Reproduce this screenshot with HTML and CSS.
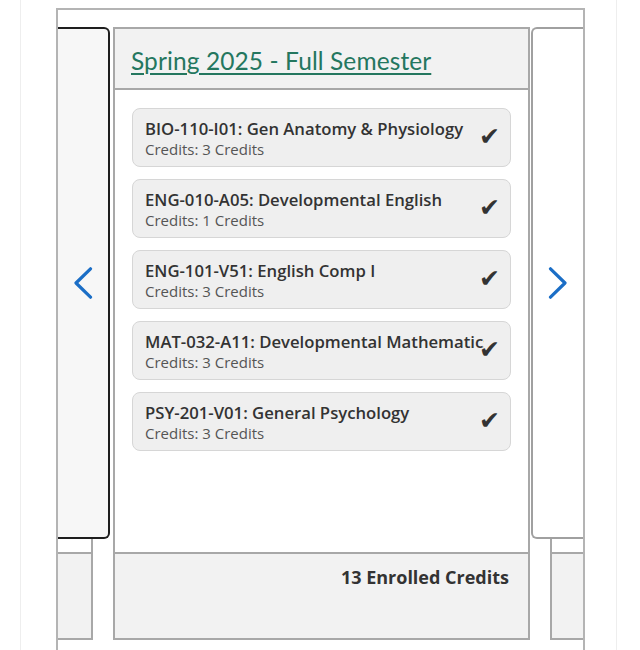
FILE: index.html
```html
<!DOCTYPE html>
<html lang="en">
<head>
<meta charset="utf-8">
<title>Schedule</title>
<link rel="stylesheet" href="styles.css">
</head>
<body>
<div class="page">
  <div class="frame">
    <div class="track">
      <section class="card card-side" aria-hidden="true">
        <header class="card-head"></header>
        <div class="card-body"></div>
        <footer class="card-foot"></footer>
      </section>
      <section class="card">
        <header class="card-head"><a class="term" href="#">Spring 2025 - Full Semester</a></header>
        <div class="card-body">
          <div class="course">
            <div class="course-title">BIO-110-I01: Gen Anatomy &amp; Physiology</div>
            <div class="course-credits">Credits: 3 Credits</div>
            <span class="check">✔</span>
          </div>
          <div class="course">
            <div class="course-title">ENG-010-A05: Developmental English</div>
            <div class="course-credits">Credits: 1 Credits</div>
            <span class="check">✔</span>
          </div>
          <div class="course">
            <div class="course-title">ENG-101-V51: English Comp I</div>
            <div class="course-credits">Credits: 3 Credits</div>
            <span class="check">✔</span>
          </div>
          <div class="course">
            <div class="course-title">MAT-032-A11: Developmental Mathematics</div>
            <div class="course-credits">Credits: 3 Credits</div>
            <span class="check">✔</span>
          </div>
          <div class="course">
            <div class="course-title">PSY-201-V01: General Psychology</div>
            <div class="course-credits">Credits: 3 Credits</div>
            <span class="check">✔</span>
          </div>
        </div>
        <footer class="card-foot">13 Enrolled Credits</footer>
      </section>
      <section class="card card-side" aria-hidden="true">
        <header class="card-head"></header>
        <div class="card-body"></div>
        <footer class="card-foot"></footer>
      </section>
    </div>
    <button class="nav nav-prev" aria-label="Previous term">
      <svg width="20" height="32" viewBox="0 0 20 32"><path d="M17.5 1.8 L3 16 L17.5 30.2" fill="none" stroke="#1b6ec6" stroke-width="3.2" stroke-linecap="round" stroke-linejoin="round"/></svg>
    </button>
    <button class="nav nav-next" aria-label="Next term">
      <svg width="20" height="32" viewBox="0 0 20 32"><path d="M2.5 1.8 L17 16 L2.5 30.2" fill="none" stroke="#1b6ec6" stroke-width="3.2" stroke-linecap="round" stroke-linejoin="round"/></svg>
    </button>
  </div>
</div>
</body>
</html>
```

FILE: styles.css
```css
html, body {
  margin: 0;
  padding: 0;
  background: #ffffff;
  font-family: "Open Sans", "Liberation Sans", sans-serif;
  color: #333333;
}

.page {
  margin: 0 23px 0 20px;
  border-left: 1px solid #eeeeee;
  border-right: 1px solid #eeeeee;
  padding-top: 8px;
  box-sizing: border-box;
  height: 650px;
  overflow: hidden;
}

.frame {
  position: relative;
  margin-left: 35px;
  width: 529px;
  box-sizing: border-box;
  border: 2px solid #b4b4b4;
  border-bottom: none;
  padding-top: 17px;
  height: 700px;
  overflow: hidden;
}

.track {
  display: flex;
  gap: 20px;
  margin-left: -382px;
}

.card {
  flex: 0 0 417px;
  width: 417px;
  min-width: 0;
  height: 613px;
  box-sizing: border-box;
  border: 2px solid #a8a8a8;
  display: flex;
  flex-direction: column;
}

.card-head {
  height: 61px;
  flex: 0 0 auto;
  box-sizing: border-box;
  background: #f2f2f2;
  border-bottom: 2px solid #a8a8a8;
  padding: 17px 0 0 16px;
}

.term {
  font-family: "Lato", "Open Sans", sans-serif;
  font-size: 24.5px;
  letter-spacing: 0.1px;
  line-height: 30px;
  color: #24775f;
  text-decoration: underline;
  text-underline-offset: 3px;
  text-decoration-thickness: 1.5px;
}

.card-body {
  flex: 1;
  min-width: 0;
  background: #ffffff;
  padding: 18px 17px 0 17px;
  display: flex;
  flex-direction: column;
  gap: 12px;
}

.course {
  position: relative;
  height: 59px;
  flex: 0 0 auto;
  min-width: 0;
  box-sizing: border-box;
  background: #efefef;
  border: 1px solid #d6d6d6;
  border-radius: 8px;
  padding: 9px 26px 0 12px;
}

.course-title {
  font-size: 16.7px;
  font-weight: 600;
  line-height: 21px;
  color: #333333;
  white-space: nowrap;
  overflow: hidden;
}

.course-credits {
  font-size: 15px;
  line-height: 20px;
  color: #555555;
}

.check {
  position: absolute;
  right: 10px;
  top: 13px;
  font-family: "DejaVu Sans", sans-serif;
  font-size: 25px;
  line-height: 30px;
  color: #333333;
}

.card-foot {
  height: 86px;
  flex: 0 0 auto;
  box-sizing: border-box;
  background: #f2f2f2;
  border-top: 2px solid #a8a8a8;
  padding: 11px 19px 0 0;
  text-align: right;
  font-size: 18px;
  font-weight: 700;
  line-height: 24px;
  color: #333333;
}

.nav {
  position: absolute;
  top: 17px;
  width: 52px;
  height: 512px;
  margin: 0;
  padding: 0;
  box-sizing: border-box;
  display: flex;
  align-items: center;
  justify-content: center;
  cursor: pointer;
}

.nav-prev {
  left: 0;
  background: #f7f7f7;
  border: 2px solid #1e1e1e;
  border-left: none;
  border-radius: 0 6px 6px 0;
}

.nav-next {
  right: 0;
  background: #ffffff;
  border: 2px solid #a0a0a0;
  border-right: none;
  border-radius: 6px 0 0 6px;
}
```
